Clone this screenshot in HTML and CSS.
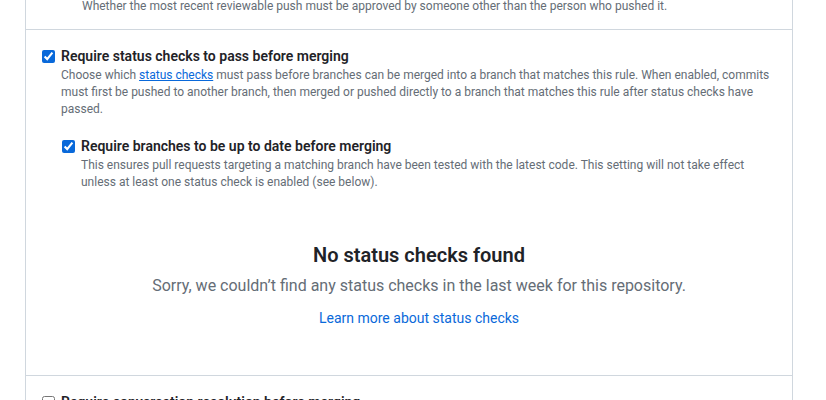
FILE: index.html
```html
<!DOCTYPE html>
<html lang="en">
<head>
<meta charset="utf-8">
<title>Branch protection</title>
<link rel="stylesheet" href="styles.css">
</head>
<body>
<div class="box">
  <div class="row row-first">
    <p class="desc nested-desc">Whether the most recent reviewable push must be approved by someone other than the person who pushed it.</p>
  </div>
  <div class="row">
    <label class="opt">
      <input type="checkbox" class="cb" checked>
      <span class="title">Require status checks to pass before merging</span>
    </label>
    <p class="desc opt-desc">Choose which <a href="#" class="ul-link">status checks</a> must pass before branches can be merged into a branch that matches this rule. When enabled, commits must first be pushed to another branch, then merged or pushed directly to a branch that matches this rule after status checks have passed.</p>
    <div class="nested">
      <label class="opt">
        <input type="checkbox" class="cb" checked>
        <span class="title">Require branches to be up to date before merging</span>
      </label>
      <p class="desc opt-desc">This ensures pull requests targeting a matching branch have been tested with the latest code. This setting will not take effect unless at least one status check is enabled (see below).</p>
    </div>
    <div class="blankslate">
      <h3 class="bs-title">No status checks found</h3>
      <p class="bs-text">Sorry, we couldn’t find any status checks in the last week for this repository.</p>
      <a href="#" class="bs-link">Learn more about status checks</a>
    </div>
  </div>
  <div class="row">
    <label class="opt">
      <input type="checkbox" class="cb">
      <span class="title">Require conversation resolution before merging</span>
    </label>
  </div>
</div>
</body>
</html>
```
FILE: styles.css
```css
html, body {
  margin: 0;
  padding: 0;
  background: #ffffff;
  overflow: hidden;
}
body {
  font-family: Roboto, "Liberation Sans", sans-serif;
  color: #1f2328;
}
.box {
  margin-left: 25px;
  width: 768px;
  box-sizing: border-box;
  border-left: 1px solid #d0d7de;
  border-right: 1px solid #d0d7de;
  margin-top: -2px;
}
.row {
  padding: 16px;
  border-top: 1px solid #d0d7de;
}
.row-first {
  border-top: none;
  padding-top: 0;
  padding-bottom: 14px;
}
.opt {
  display: flex;
  align-items: center;
  gap: 6px;
  height: 20px;
}
.cb {
  margin: 0;
  width: 13px;
  height: 13px;
  accent-color: #0969da;
  flex: none;
}
.title {
  font-size: 14px;
  font-weight: 600;
  line-height: 20px;
}
.desc {
  margin: 0;
  font-size: 12px;
  line-height: 17px;
  color: #656d76;
}
.opt-desc {
  padding-left: 19px;
  padding-top: 1px;
}
.nested-desc {
  padding-left: 40px;
}
.ul-link {
  color: #0969da;
  text-decoration: underline;
  text-underline-offset: 1px;
}
.nested {
  margin-top: 18px;
  padding-left: 20px;
}
.blankslate {
  text-align: center;
  margin-left: 20px;
  padding: 49px 32px 31px;
}
.bs-title {
  margin: 0;
  font-size: 20px;
  font-weight: 600;
  line-height: 30px;
}
.bs-text {
  margin: 4px 0 10px;
  font-size: 16px;
  line-height: 24px;
  color: #656d76;
}
.bs-link {
  display: inline-block;
  font-size: 14px;
  line-height: 20px;
  color: #0969da;
  text-decoration: none;
}
```
